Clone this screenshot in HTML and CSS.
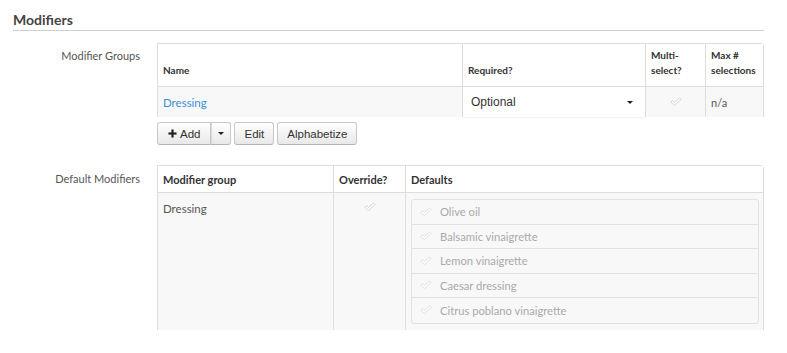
FILE: index.html
```html
<!DOCTYPE html>
<html>
<head>
<meta charset="utf-8">
<link rel="stylesheet" href="styles.css">
</head>
<body>
<div class="page">
  <h2 class="title">Modifiers</h2>

  <div class="field">
    <div class="label">Modifier Groups</div>
    <div class="control">
      <div class="grid grid-groups">
        <div class="th">Name</div>
        <div class="th">Required?</div>
        <div class="th">Multi-<br>select?</div>
        <div class="th">Max #<br>selections</div>
        <div class="td"><a class="link" href="#">Dressing</a></div>
        <div class="td td-select"><div class="select"><span>Optional</span><span class="caret"></span></div></div>
        <div class="td td-center"><svg class="check" viewBox="0 0 13 10"><path d="M1 5.2 L2.8 3.4 L4.9 5.5 L10.3 0.6 L12 2.3 L4.9 8.8 Z"/></svg></div>
        <div class="td">n/a</div>
      </div>
      <div class="toolbar">
        <div class="btn-group">
          <button class="btn btn-left"><svg class="plus" viewBox="0 0 10 10"><rect x="3.8" y="0.5" width="2.4" height="9"/><rect x="0.5" y="3.8" width="9" height="2.4"/></svg>Add</button>
          <button class="btn btn-right"><span class="caret"></span></button>
        </div>
        <button class="btn">Edit</button>
        <button class="btn">Alphabetize</button>
      </div>
    </div>
  </div>

  <div class="field field-defaults">
    <div class="label">Default Modifiers</div>
    <div class="control">
      <div class="grid grid-defaults">
        <div class="th th2">Modifier group</div>
        <div class="th th2">Override?</div>
        <div class="th th2">Defaults</div>
        <div class="td td2">Dressing</div>
        <div class="td td2 td-center"><svg class="check" viewBox="0 0 13 10"><path d="M1 5.2 L2.8 3.4 L4.9 5.5 L10.3 0.6 L12 2.3 L4.9 8.8 Z"/></svg></div>
        <div class="td td2 td-list">
          <ul class="list">
            <li><svg class="check" viewBox="0 0 13 10"><path d="M1 5.2 L2.8 3.4 L4.9 5.5 L10.3 0.6 L12 2.3 L4.9 8.8 Z"/></svg>Olive oil</li>
            <li><svg class="check" viewBox="0 0 13 10"><path d="M1 5.2 L2.8 3.4 L4.9 5.5 L10.3 0.6 L12 2.3 L4.9 8.8 Z"/></svg>Balsamic vinaigrette</li>
            <li><svg class="check" viewBox="0 0 13 10"><path d="M1 5.2 L2.8 3.4 L4.9 5.5 L10.3 0.6 L12 2.3 L4.9 8.8 Z"/></svg>Lemon vinaigrette</li>
            <li><svg class="check" viewBox="0 0 13 10"><path d="M1 5.2 L2.8 3.4 L4.9 5.5 L10.3 0.6 L12 2.3 L4.9 8.8 Z"/></svg>Caesar dressing</li>
            <li><svg class="check" viewBox="0 0 13 10"><path d="M1 5.2 L2.8 3.4 L4.9 5.5 L10.3 0.6 L12 2.3 L4.9 8.8 Z"/></svg>Citrus poblano vinaigrette</li>
          </ul>
        </div>
      </div>
    </div>
  </div>
</div>
</body>
</html>
```

FILE: styles.css
```css
html, body {
  margin: 0;
  padding: 0;
  background: #fff;
}
body {
  font-family: Lato, "Open Sans", sans-serif;
  color: #555;
  font-size: 11px;
  overflow: hidden;
}
.page {
  padding: 0 23px 0 13px;
}
.title {
  margin: 0;
  padding: 11px 0 1px;
  font-size: 14px;
  line-height: 18px;
  font-weight: 700;
  color: #444;
  border-bottom: 1px solid #cfcfcf;
}
.field {
  display: grid;
  grid-template-columns: 127px 1fr;
  column-gap: 17px;
  margin-top: 12px;
}
.field-defaults {
  margin-top: 20px;
}
.label {
  text-align: right;
  font-size: 11px;
  line-height: 16px;
  padding-top: 5px;
  color: #555;
}
.field-defaults .label {
  padding-top: 6px;
}
.grid {
  display: grid;
  border: 1px solid #ddd;
  border-bottom: none;
  border-top-right-radius: 4px;
}
.grid-groups {
  grid-template-columns: 304px 183px 60px 1fr;
  grid-template-rows: 43px 30px;
}
.grid-defaults {
  grid-template-columns: 175px 72px 1fr;
  grid-template-rows: 27px 137px;
}
.th {
  display: flex;
  align-items: flex-end;
  padding: 0 5px 8px;
  font-size: 10px;
  line-height: 15px;
  font-weight: 700;
  color: #333;
  border-bottom: 1px solid #ddd;
  background: #fff;
}
.th + .th {
  border-left: 1px solid #ddd;
}
.th2 {
  align-items: center;
  padding: 0 5px;
  font-size: 11px;
}
.td {
  background: #f8f8f8;
  padding: 0 5px;
  display: flex;
  align-items: center;
  font-size: 11px;
  color: #555;
}
.td + .td {
  border-left: 1px solid #ddd;
}
.link {
  color: #3a8fd5;
  text-decoration: none;
  font-size: 11.5px;
}
.td-select {
  padding: 0;
  align-items: stretch;
}
.select {
  flex: 1;
  background: #fff;
  box-shadow: 0 1px 1px rgba(0,0,0,0.05);
  display: flex;
  align-items: center;
  justify-content: space-between;
  padding: 0 12px 0 8px;
  font-family: "Liberation Sans", Arial, sans-serif;
  font-size: 12px;
  color: #333;
}
.caret {
  display: inline-block;
  width: 0;
  height: 0;
  border-left: 3px solid transparent;
  border-right: 3px solid transparent;
  border-top: 3px solid #222;
}
.td-center {
  justify-content: center;
}
.check {
  width: 12px;
  height: 10px;
  fill: #fff;
  stroke: #c8c8c8;
  stroke-width: 0.8;
}
.toolbar {
  display: flex;
  gap: 3px;
  margin-top: 5px;
}
.btn-group {
  display: flex;
}
.btn {
  height: 23px;
  padding: 0 9px;
  font-family: "Liberation Sans", Arial, sans-serif;
  font-size: 11.5px;
  color: #333;
  background: linear-gradient(#ffffff, #e8e8e8);
  border: 1px solid #c8c8c8;
  border-bottom-color: #b5b5b5;
  border-radius: 3px;
  display: flex;
  align-items: center;
  gap: 3px;
  box-shadow: inset 0 1px 0 rgba(255,255,255,0.4);
}
.btn-left {
  border-top-right-radius: 0;
  border-bottom-right-radius: 0;
  padding: 0 10px 0 10px;
}
.btn-right {
  border-left: none;
  border-top-left-radius: 0;
  border-bottom-left-radius: 0;
  width: 20px;
  justify-content: center;
  padding: 0;
  box-shadow: inset 1px 0 0 #d8d8d8;
}
.plus {
  width: 9px;
  height: 9px;
  fill: #222;
}
.td2 {
  align-items: flex-start;
  padding: 9px 5px 0;
  font-size: 11.5px;
}
.td2.td-center {
  padding-top: 9px;
}
.td-list {
  padding: 6px 4px 0 5px;
  display: block;
}
.list {
  list-style: none;
  margin: 0;
  padding: 0;
  border: 1px solid #e2e2e2;
  border-radius: 3px;
}
.list li {
  height: 24.5px;
  box-sizing: border-box;
  display: flex;
  align-items: center;
  gap: 8px;
  padding-left: 8px;
  color: #aaa;
  font-size: 11.2px;
  border-bottom: 1px solid #e2e2e2;
}
.list li:last-child {
  border-bottom: none;
}
.list .check {
  stroke: #d6d6d6;
}
```
